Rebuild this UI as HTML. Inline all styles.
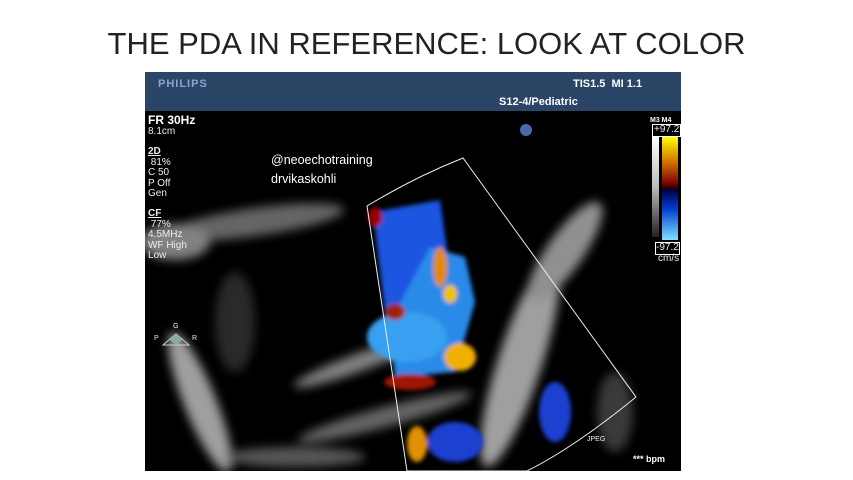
<!DOCTYPE html>
<html><head><meta charset="utf-8"><style>
body{margin:0;width:853px;height:480px;background:#fff;overflow:hidden;position:relative;font-family:"Liberation Sans",sans-serif}
.t{position:absolute;left:0;width:853px;top:26px;text-align:center;font-size:31px;color:#222}
.us{position:absolute;left:145px;top:72px;width:536px;height:399px;background:#000;overflow:hidden}
.hd{position:absolute;left:0;top:0;width:536px;height:39px;background:#2b4566}
.w{position:absolute;color:#fff;font-weight:bold;font-size:11px;line-height:11px}
.s{position:absolute;color:#eee;font-size:10px;line-height:10.5px}
</style></head><body>
<div class="t">THE PDA IN REFERENCE: LOOK AT COLOR</div>
<div class="us">
<svg width="536" height="399" style="position:absolute;left:0;top:0">
<defs>
<filter id="b" x="-50%" y="-50%" width="200%" height="200%"><feGaussianBlur stdDeviation="5"/></filter>
<filter id="b2" x="-50%" y="-50%" width="200%" height="200%"><feGaussianBlur stdDeviation="2"/></filter>
<linearGradient id="cb" x1="0" y1="0" x2="0" y2="1">
<stop offset="0" stop-color="#ffff00"/><stop offset="0.25" stop-color="#d07000"/><stop offset="0.45" stop-color="#800000"/><stop offset="0.5" stop-color="#200000"/><stop offset="0.52" stop-color="#000050"/><stop offset="0.7" stop-color="#0040d0"/><stop offset="1" stop-color="#80e0ff"/></linearGradient>
<linearGradient id="gb" x1="0" y1="0" x2="0" y2="1"><stop offset="0" stop-color="#fff"/><stop offset="0.5" stop-color="#bbb"/><stop offset="1" stop-color="#222"/></linearGradient>
</defs>
<g filter="url(#b)" fill="#777" opacity="0.85">
<ellipse cx="110" cy="150" rx="90" ry="14" transform="rotate(-8 110 150)"/>
<ellipse cx="30" cy="170" rx="35" ry="18" fill="#999"/>
<ellipse cx="55" cy="330" rx="16" ry="75" transform="rotate(-22 55 330)" fill="#bbb"/>
<ellipse cx="215" cy="290" rx="70" ry="9" transform="rotate(-20 215 290)" fill="#999"/>
<ellipse cx="240" cy="345" rx="90" ry="10" transform="rotate(-15 240 345)"/>
<ellipse cx="375" cy="290" rx="22" ry="110" transform="rotate(18 375 290)" fill="#bbb"/>
<ellipse cx="420" cy="180" rx="18" ry="60" transform="rotate(35 420 180)" fill="#aaa"/>
<ellipse cx="150" cy="385" rx="70" ry="10" fill="#666"/>
<ellipse cx="470" cy="340" rx="18" ry="40" fill="#444"/>
<ellipse cx="90" cy="250" rx="20" ry="50" fill="#333"/>
</g>
<g filter="url(#b2)">
<path d="M228 140 L295 128 L305 200 L295 250 L250 270 L240 240 Z" fill="#1f55e0"/>
<path d="M285 175 L320 185 L330 230 L310 300 L250 305 L245 250 Z" fill="#2a8ae8"/>
<ellipse cx="262" cy="265" rx="40" ry="25" fill="#38a0f0"/>
<ellipse cx="295" cy="195" rx="7" ry="20" fill="#e08a10"/>
<ellipse cx="315" cy="285" rx="16" ry="14" fill="#f0b000"/>
<ellipse cx="305" cy="222" rx="7" ry="9" fill="#f0c000"/>
<ellipse cx="265" cy="310" rx="26" ry="8" fill="#a01800"/>
<ellipse cx="250" cy="240" rx="10" ry="8" fill="#a02000"/>
<ellipse cx="230" cy="145" rx="7" ry="10" fill="#900"/>
<ellipse cx="272" cy="372" rx="10" ry="18" fill="#e09000"/>
<ellipse cx="310" cy="370" rx="28" ry="20" fill="#1a40d0"/>
<ellipse cx="410" cy="340" rx="16" ry="30" fill="#1a40d0"/>
</g>
<path d="M222 134 Q270 105 318 86 L491 325 Q430 375 382 399 L262 399 Z" fill="none" stroke="#eee" stroke-width="1"/>
<rect x="507" y="65" width="7" height="100" fill="url(#gb)"/>
<rect x="517" y="65" width="16" height="103" fill="url(#cb)"/>
<circle cx="381" cy="58" r="6" fill="#4a6aaa"/>
<path d="M18 273 L31 262 L44 273 Z" fill="none" stroke="#ccc"/>
<path d="M31 263 L37 268 L31 273 L25 268Z" fill="#8aa"/>
</svg>
<div class="hd"></div>
<div class="w" style="left:13px;top:7px;color:#8fa4cc;font-size:11px;letter-spacing:1px">PHILIPS</div>
<div class="w" style="left:428px;top:7px;font-size:11px">TIS1.5&nbsp;&nbsp;MI 1.1</div>
<div class="w" style="left:354px;top:25px">S12-4/Pediatric</div>
<div class="w" style="left:3px;top:43px;font-size:12px">FR 30Hz</div>
<div class="s" style="left:3px;top:55px">8.1cm</div>
<div class="s" style="left:3px;top:75px"><u><b>2D</b></u><br>&nbsp;81%<br>C 50<br>P Off<br>Gen</div>
<div class="s" style="left:3px;top:137px"><u><b>CF</b></u><br>&nbsp;77%<br>4.5MHz<br>WF High<br>Low</div>
<div style="position:absolute;left:126px;top:79px;color:#fff;font-size:12.5px;line-height:19px">@neoechotraining<br>drvikaskohli</div>
<div class="w" style="left:505px;top:43px;font-size:7px">M3 M4</div>
<div class="s" style="left:507px;top:52px;border:1px solid #fff;padding:0 1px;font-size:10px">+97.2</div>
<div class="s" style="left:510px;top:170px;border:1px solid #fff;font-size:10px">-97.2</div>
<div class="s" style="left:513px;top:182px">cm/s</div>
<div class="s" style="left:28px;top:250px;font-size:7px">G</div>
<div class="s" style="left:9px;top:262px;font-size:7px">P</div>
<div class="s" style="left:47px;top:262px;font-size:7px">R</div>
<div class="s" style="left:442px;top:363px;font-size:7px">JPEG</div>
<div class="w" style="left:488px;top:382px;font-size:9px">*** bpm</div>
</div>
</body></html>
